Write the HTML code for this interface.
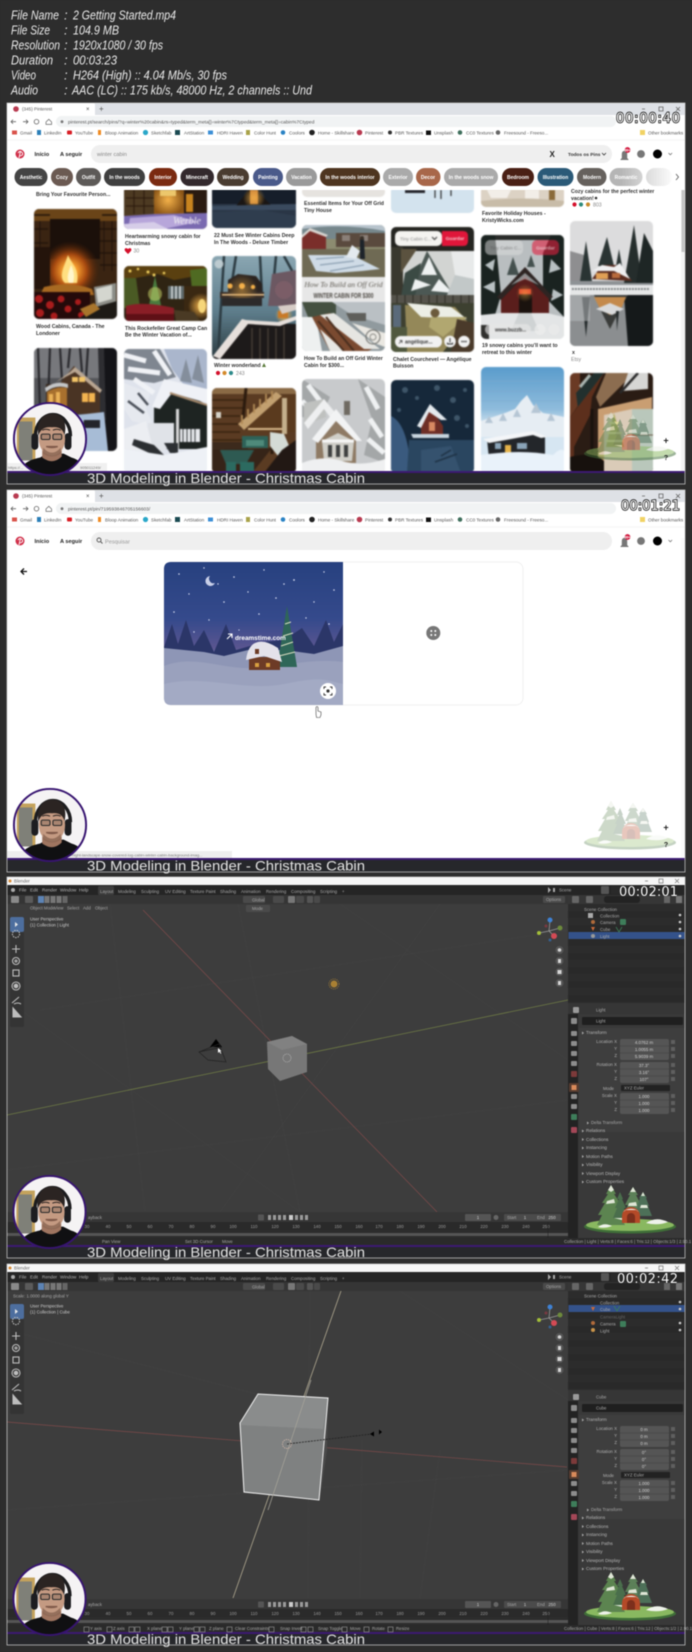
<!DOCTYPE html>
<html lang="en"><head><meta charset="utf-8"><title>2 Getting Started.mp4</title>
<style>
html,body{margin:0;padding:0;background:#2d2d2d}
#w{position:relative;width:692px;height:1652px;overflow:hidden;background:#2d2d2d;filter:blur(.42px)}
.b{position:absolute}
svg.p{position:absolute;border-radius:5px;overflow:hidden;filter:blur(.45px)}
svg.f{position:absolute;left:0;top:0}
text{font-family:"Liberation Sans",sans-serif}
.h{font-family:"Liberation Serif",serif;font-style:italic;font-size:13px;fill:#eaeaea}
.tt{font-size:14px;fill:#e2e2e2}
.tc{font-family:"DejaVu Sans",sans-serif;font-size:13px;fill:#fff;stroke:#000;stroke-width:1.4px;paint-order:stroke}
.bm{font-size:4.6px;fill:#555}
.pt{font-size:5.2px;font-weight:bold;fill:#333}
.ps{font-size:5.2px;fill:#888}
.pl{font-size:5px;font-weight:bold;fill:#fff;text-anchor:middle}
.n{font-size:5.6px;font-weight:bold;fill:#222}
.bl{font-size:4.6px;fill:#b5b5b5}
.bs{font-size:4.4px;fill:#a8a8a8}
.br{font-size:4.4px;fill:#b0b0b0;text-anchor:end}
.bv{font-size:4.4px;fill:#d0d0d0;text-anchor:middle}
.num{font-size:4.4px;fill:#9a9a9a;text-anchor:middle}
</style></head><body><div id="w">

<svg width="0" height="0" style="position:absolute"><defs>
<linearGradient id="gBlue" x1="0" y1="0" x2="0" y2="1"><stop offset="0" stop-color="#5a9ccc"/><stop offset=".4" stop-color="#8fbcdc"/><stop offset=".55" stop-color="#d4e4f0"/><stop offset="1" stop-color="#e6f0f8"/></linearGradient>
<linearGradient id="gNight" x1="0" y1="0" x2="0" y2="1"><stop offset="0" stop-color="#27417f"/><stop offset=".4" stop-color="#354a8c"/><stop offset=".6" stop-color="#5a5590"/><stop offset=".68" stop-color="#7d87ad"/><stop offset="1" stop-color="#8a93b3"/></linearGradient>
<linearGradient id="gTeal" x1="0" y1="0" x2="0" y2="1"><stop offset="0" stop-color="#8aa6b2"/><stop offset=".55" stop-color="#5d7c8a"/><stop offset="1" stop-color="#2a3a40"/></linearGradient>
<radialGradient id="gFire"><stop offset="0" stop-color="#fff0b0"/><stop offset=".22" stop-color="#f8a030"/><stop offset=".55" stop-color="#a84a10"/><stop offset="1" stop-color="#4a2008" stop-opacity="0"/></radialGradient>
<radialGradient id="gWarm"><stop offset="0" stop-color="#f4b24a"/><stop offset="1" stop-color="#f4b24a" stop-opacity="0"/></radialGradient>
<linearGradient id="fade" x1="0" y1="0" x2="1" y2="0"><stop offset="0" stop-color="#fff" stop-opacity="0"/><stop offset="1" stop-color="#fff"/></linearGradient>

<symbol id="man" viewBox="-40 -40 80 80" overflow="visible">
<clipPath id="mc"><circle cx="0" cy="0" r="36.5"/></clipPath>
<g clip-path="url(#mc)">
<rect x="-40" y="-40" width="80" height="80" fill="#f5f3f4"/>
<rect x="-34" y="-22" width="19" height="44" fill="#c4a25c"/>
<rect x="-32" y="-18" width="14" height="40" fill="#7f8078"/>
<path d="M-32 40C-30 26-24 22-10 19L-4 15 14 15 22 19C32 22 36 28 40 40Z" fill="#101012"/>
<path d="M-8 8V19Q3 27 12 18V8Z" fill="#9f7560"/>
<path d="M-15 -3A18 22 0 0 1 21 -3" fill="none" stroke="#1c1c1e" stroke-width="3.500"/>
<rect x="-19" y="-6" width="7" height="17" rx="3.500" fill="#1d1d20"/>
<rect x="15" y="-6" width="7" height="17" rx="3.500" fill="#1d1d20"/>
<ellipse cx="2" cy="0" rx="13.500" ry="17" fill="#c49a82"/>
<path d="M-12 -3C-14 -18-7 -26 2 -26 12 -26 18 -18 15 -4 13 -11 8 -13 2 -12-4 -13-10 -11-12 -3Z" fill="#2b2422"/>
<rect x="-9" y="-5" width="9" height="5.500" rx="1.500" fill="#a98571" stroke="#2a2a2a" stroke-width="1.100"/>
<rect x="3" y="-5" width="9" height="5.500" rx="1.500" fill="#a98571" stroke="#2a2a2a" stroke-width="1.100"/>
<path d="M-8 -9q4-2 8 0M3 -9q4-2 8 0" stroke="#2b2422" stroke-width="1" fill="none"/>
<path d="M-4 7H8V8.500Q2 10.500-4 8.500Z" fill="#805a4a"/>
<path d="M-7 9Q2 19 11 9V15Q2 21-7 15Z" fill="#8a6552" opacity=".8"/>
</g>
<circle cx="0" cy="0" r="37" fill="none" stroke="#371470" stroke-width="2"/>
</symbol>

<symbol id="logo" viewBox="0 0 92 50" overflow="visible">
<ellipse cx="44" cy="41.500" rx="46" ry="7" fill="#3f6e38"/>
<ellipse cx="44" cy="40" rx="44" ry="6" fill="#89b860"/>
<path d="M25 0L30 9H28L34 18H31L38 30H34L39 40H11L16 30H12L19 18H16L22 9H20Z" fill="#5c8450"/>
<path d="M25 0L28 5 25 7 22 5ZM21 16L28 14 29 18 20 19ZM30 30L37 31 36 35 28 33Z" fill="#dfe6d6"/>
<path d="M34 7L37 14H36L40 23H38L42 33H27L31 23H29L33 14H31Z" fill="#4a6e4c"/>
<path d="M47 2L52 10H50L55 20H52L57 31H37L42 20H39L44 10H42Z" fill="#5c8058"/>
<path d="M47 2L50 7H44ZM43 18L50 17 51 21 42 21Z" fill="#dfe6d6"/>
<path d="M57 7L61 13H60L63 21H62L66 31H48L52 21H51L54 13H53Z" fill="#4d7058"/>
<path d="M57 7L59 11H55ZM55 20L61 20 62 23 54 23Z" fill="#dfe6d6"/>
<path d="M36 38V31A9 9 0 0 1 54 31V38Z" fill="#b44a28"/>
<path d="M41 38V32A4 4 0 0 1 49 32V38Z" fill="#7c2f1c"/>
<path d="M37 27A9 6 0 0 1 53 27L50 25H40Z" fill="#f0f0ea"/>
<path d="M60 38Q70 31 82 37 72 41 60 38Z" fill="#eef2ea"/>
<path d="M12 42Q18 37 26 41 18 44 12 42Z" fill="#eef2ea"/>
</symbol>

<symbol id="hdr" viewBox="0 0 692 60" overflow="visible">
<rect x="7" y="0" width="678" height="38" fill="#fff"/>
<rect x="7" y="0" width="678" height="12" fill="#dee1e6"/>
<path d="M7 12V2Q7 0 9 0H93Q95 0 95 2V12Z" fill="#fff"/>
<circle cx="16" cy="6" r="2.800" fill="#b83a50"/>
<text x="22" y="7.700" class="bm" fill="#666">(345) Pinterest</text>
<text x="86" y="8" style="font-size:6px;fill:#444">×</text>
<text x="99" y="8.500" style="font-size:8px;fill:#555">+</text>
<path d="M642 6h3M659 4h4v4h-4zM676 4l4 4M680 4l-4 4" stroke="#666" stroke-width=".8" fill="none"/>
<path d="M11 18.700h5M13 16.700l-2 2 2 2M23 18.700h5M26 16.700l2 2-2 2" stroke="#666" stroke-width=".8" fill="none"/>
<circle cx="36.500" cy="18.700" r="2.300" fill="none" stroke="#666" stroke-width=".8"/>
<path d="M46 19l2.800-2.800 2.800 2.800v2.400h-5.600z" fill="none" stroke="#666" stroke-width=".7"/>
<rect x="56" y="13" width="560" height="11" rx="5.500" fill="#f1f3f4"/>
<circle cx="62" cy="18.700" r="1.400" fill="#777"/>
<g class="bm" transform="translate(0,-2)">
<path d="M12 29.500h5v4h-5z" fill="#d9534a"/><text x="20" y="33.500">Gmail</text>
<rect x="37" y="29" width="4" height="5" fill="#2c7fb8"/><text x="44" y="33.500">LinkedIn</text>
<rect x="67" y="29.500" width="5" height="4" rx="1" fill="#d81f26"/><text x="75" y="33.500">YouTube</text>
<rect x="98" y="29" width="3" height="5" fill="#ef8a21"/><text x="105" y="33.500">Bloop Animation</text>
<circle cx="145.500" cy="31.500" r="2.600" fill="#2aa7c9"/><text x="151" y="33.500">Sketchfab</text>
<rect x="175" y="29" width="5" height="5" fill="#1b4a52"/><text x="184" y="33.500">ArtStation</text>
<rect x="208" y="29.500" width="5" height="4" fill="#3c8fd6"/><text x="217" y="33.500">HDRI Haven</text>
<rect x="246" y="29" width="4" height="5" fill="#a9a24a"/><text x="254" y="33.500">Color Hunt</text>
<circle cx="283" cy="31.500" r="2.300" fill="#2a82c4"/><text x="289" y="33.500">Coolors</text>
<circle cx="312" cy="31.500" r="2.800" fill="#222"/><text x="318" y="33.500">Home - Skillshare</text>
<circle cx="359.500" cy="31.500" r="2.800" fill="#b83a50"/><text x="365" y="33.500">Pinterest</text>
<circle cx="390" cy="31.500" r="2" fill="#333"/><text x="395" y="33.500">PBR Textures</text>
<rect x="426" y="29.500" width="5" height="4.500" fill="#111"/><text x="434" y="33.500">Unsplash</text>
<circle cx="460" cy="31.500" r="2.300" fill="#3f6f5c"/><text x="466" y="33.500">CC0 Textures</text>
<circle cx="498" cy="31.500" r="2.300" fill="#666"/><text x="504" y="33.500">Freesound - Freeso...</text>
<rect x="640" y="29" width="5" height="5" fill="#f1d264"/><text x="648" y="33.500">Other bookmarks</text>
</g>
<path d="M7 37h678" stroke="#e8e8e8" stroke-width=".5"/>
<circle cx="20" cy="51" r="4.500" fill="#d1304a"/>
<path d="M19 55l1.400-6.500M18 50q2-3 4-.5t-2 3.500" stroke="#fff" stroke-width=".9" fill="none"/>
<text x="34.500" y="53" class="n">Início</text>
<text x="60" y="53" class="n">A seguir</text>
</symbol>

<symbol id="hic" viewBox="0 0 692 20" overflow="visible">
<path d="M620.500 16v-.6l1.300-1.300v-4.100q0-3 2.700-3.300 2.700 .3 2.700 3.300v4.100l1.300 1.300v.6z" fill="#777"/>
<circle cx="627.500" cy="6" r="2.900" fill="#d1143a"/>
<text x="627.500" y="7.400" style="font-size:3.600px;font-weight:bold;fill:#fff;text-anchor:middle">99+</text>
<circle cx="641" cy="10" r="3.900" fill="#777"/>
<circle cx="657.500" cy="10" r="4.500" fill="#000"/>
<path d="M668.500 9l1.800 1.800 1.800-1.800" stroke="#777" stroke-width=".8" fill="none"/>
</symbol>

<symbol id="bch" viewBox="0 0 692 1652" overflow="visible">
<rect x="7" y="877" width="678" height="8" fill="#f6f6f6"/>
<circle cx="10" cy="881" r="1.500" fill="#d88a33"/>
<text x="14" y="882.500" style="font-size:4.600px;fill:#666">Blender</text>
<path d="M645 881h3M659 879h4v4h-4zM675 879l4 4M679 879l-4 4" stroke="#777" stroke-width=".7" fill="none"/>
<rect x="7" y="885" width="561" height="10" fill="#252525"/>
<rect x="568" y="885" width="117" height="10" fill="#252525"/>
<rect x="7" y="895" width="561" height="9" fill="#353535"/>
<circle cx="13" cy="890" r="2" fill="#aaa"/>
<g class="bl">
<text x="19" y="891.500">File</text><text x="30" y="891.500">Edit</text><text x="42" y="891.500">Render</text><text x="60" y="891.500">Window</text><text x="79" y="891.500">Help</text>
</g>
<rect x="98" y="886" width="16" height="9" rx="1.500" fill="#3c3c3c"/>
<g class="bs" fill="#999">
<text x="100" y="893">Layout</text><text x="118" y="893">Modeling</text><text x="141" y="893">Sculpting</text><text x="165" y="893">UV Editing</text><text x="190" y="893">Texture Paint</text><text x="220" y="893">Shading</text><text x="241" y="893">Animation</text><text x="266" y="893">Rendering</text><text x="291" y="893">Compositing</text><text x="320" y="893">Scripting</text><text x="342" y="893">+</text>
<text x="559" y="891.500">Scene</text>
</g>
<path d="M548 887l3 3-3 3zM553 888h2v4h-2z" fill="#aaa"/>
<rect x="601" y="886" width="8" height="8" rx="1" fill="#555"/>
<rect x="611" y="886" width="60" height="8" fill="#2a2a2a"/>
<g fill="#8a8a8a">
<rect x="11" y="896" width="8" height="7" rx="1"/>
<rect x="25" y="896" width="8" height="7" rx="1" fill="#5b5b5b"/>
<rect x="38" y="896" width="6" height="7" fill="#5c83b4"/><rect x="44.500" y="896" width="5" height="7" fill="#777"/><rect x="50.500" y="896" width="5" height="7" fill="#777"/><rect x="56.500" y="896" width="5" height="7" fill="#777"/><rect x="62.500" y="896" width="5" height="7" fill="#666"/>
<rect x="243" y="896" width="22" height="7" rx="1" fill="#4a4a4a"/><rect x="273" y="896" width="11" height="7" rx="1" fill="#4a4a4a"/><rect x="288" y="896" width="7" height="7" rx="1" fill="#777"/><rect x="296" y="896" width="8" height="7" rx="1" fill="#4a4a4a"/><rect x="307" y="896" width="6" height="7" rx="1" fill="#555"/><rect x="314" y="896" width="6" height="7" rx="1" fill="#4a4a4a"/>
<rect x="543" y="896" width="22" height="7" rx="1" fill="#4a4a4a"/>
</g>
<text x="546" y="901" class="bs">Options</text>
<text x="252" y="901.500" class="bs">Global</text>
<rect x="10" y="917" width="14" height="15" rx="2" fill="#4d6e9e"/>
<rect x="10" y="932" width="14" height="95" rx="2" fill="#2f2f2f" opacity=".6"/>
<path d="M15 922l3 2.500-3 2.500z" fill="#e8e8e8"/>
<g fill="none" stroke="#bdbdbd" stroke-width="1.100">
<circle cx="16" cy="934" r="3.600" stroke-dasharray="1.500 1"/>
<path d="M16 945v8M12 949h8"/>
<circle cx="16" cy="961" r="3.500"/><circle cx="16" cy="961" r="1"/>
<rect x="13" y="970" width="6" height="6"/>
<circle cx="16" cy="986" r="4"/><circle cx="16" cy="986" r="1.800" fill="#bdbdbd"/>
<path d="M12 1003l7-6M14 1004q4-2 7 0"/>
<path d="M13 1008v9h8z" fill="#bdbdbd"/>
</g>
<path d="M549 931l1-10M549 931l5 5M549 931l11-3M549 931l-10 2" stroke="#999" stroke-width=".8"/>
<circle cx="550" cy="920" r="2.500" fill="#3f82d4"/><circle cx="554" cy="936" r="3" fill="#d34a55"/><circle cx="560" cy="928" r="2.500" fill="#6d8a3c"/><circle cx="539" cy="933" r="2" fill="#a3bf3a"/><circle cx="550" cy="940" r="1.500" fill="#365f8f"/><circle cx="546" cy="926" r="1.500" fill="#7a3a42"/>
<g fill="#555"><circle cx="559.500" cy="950" r="4"/><circle cx="559.500" cy="961" r="4"/><circle cx="559.500" cy="972" r="4"/><circle cx="559.500" cy="983" r="4"/></g>
<g fill="#d5d5d5"><circle cx="559.500" cy="950" r="1.800"/><rect x="558" y="959" width="3" height="4"/><rect x="557.500" y="970" width="4" height="4"/><rect x="558" y="981" width="3" height="4"/></g>
<rect x="7" y="1212" width="561" height="26" fill="#2c2c2c"/>
<rect x="7" y="1212" width="561" height="10" fill="#363636"/>
<rect x="7" y="1222" width="561" height="8" fill="#2a2a2a"/>
<rect x="7" y="1233" width="561" height="3" fill="#555"/>
<g fill="#9a9a9a"><rect x="258" y="1214.500" width="6" height="6" rx="1" fill="#555"/><rect x="268" y="1215" width="3" height="5"/><rect x="273" y="1215" width="3" height="5"/><rect x="278" y="1215" width="3" height="5"/><rect x="283" y="1215" width="3" height="5"/><rect x="289" y="1215" width="4" height="5" fill="#ccc"/><rect x="295" y="1215" width="3" height="5"/><rect x="300" y="1215" width="3" height="5"/><rect x="305" y="1215" width="3" height="5"/></g>
<rect x="465" y="1214" width="26" height="7" rx="1" fill="#555"/><rect x="504" y="1214" width="57" height="7" rx="1" fill="#4b4b4b"/>
<circle cx="496" cy="1217.500" r="2.500" fill="#666"/>
<text x="478" y="1219" class="bv">1</text>
<text x="507" y="1219" class="bs">Start</text><text x="525" y="1219" class="bv">1</text><text x="537" y="1219" class="bs">End</text><text x="552" y="1219" class="bv">250</text>
<g class="num">
<text x="87" y="1228">30</text><text x="108" y="1228">40</text><text x="129" y="1228">50</text><text x="150" y="1228">60</text><text x="171" y="1228">70</text><text x="192" y="1228">80</text><text x="213" y="1228">90</text><text x="233" y="1228">100</text><text x="254" y="1228">110</text><text x="275" y="1228">120</text><text x="296" y="1228">130</text><text x="317" y="1228">140</text><text x="338" y="1228">150</text><text x="359" y="1228">160</text><text x="379" y="1228">170</text><text x="400" y="1228">180</text><text x="421" y="1228">190</text><text x="442" y="1228">200</text><text x="463" y="1228">210</text><text x="484" y="1228">220</text><text x="505" y="1228">230</text><text x="526" y="1228">240</text><text x="546" y="1228">250</text>
</g>
<path d="M548 1222v16" stroke="#222" stroke-width=".6"/>
<rect x="7" y="1238" width="678" height="7" fill="#2a2a2a"/>
<rect x="7" y="1245" width="678" height="2" fill="#3c1a72"/>
<rect x="7" y="1247" width="678" height="11" fill="#26272b"/>
<rect x="568" y="895" width="117" height="108" fill="#2c2c2c"/>
<rect x="568" y="895" width="117" height="9" fill="#363636"/>
<g fill="#292929"><rect x="568" y="911" width="117" height="7"/><rect x="568" y="925" width="117" height="7"/><rect x="568" y="939" width="117" height="7"/><rect x="568" y="953" width="117" height="7"/><rect x="568" y="967" width="117" height="7"/><rect x="568" y="981" width="117" height="7"/><rect x="568" y="995" width="117" height="7"/></g>
<rect x="572" y="896" width="7" height="7" rx="1" fill="#666"/><rect x="586" y="896" width="7" height="7" rx="1" fill="#666"/><rect x="604" y="896" width="36" height="7" rx="3" fill="#232323"/><rect x="664" y="896" width="6" height="7" fill="#666"/><rect x="676" y="896" width="6" height="7" fill="#777"/>
<rect x="568" y="1003" width="117" height="235" fill="#393939"/>
<rect x="568" y="1003" width="117" height="11" fill="#363636"/>
<rect x="568" y="1014" width="10" height="224" fill="#232323"/>
<g fill="#8c8c8c">
<rect x="571" y="1018" width="6" height="6" rx="1"/><rect x="571" y="1031" width="6" height="5" rx="1"/><rect x="571" y="1041" width="6" height="5" rx="1"/><rect x="571" y="1051" width="6" height="5" rx="1"/><rect x="571" y="1061" width="6" height="5" rx="1"/><rect x="571" y="1071" width="6" height="6" rx="1" fill="#7c3a3a"/><rect x="569" y="1083" width="10" height="9" rx="1" fill="#563c30"/><rect x="571.500" y="1085" width="5" height="5" fill="#d98a5a"/><rect x="571" y="1094" width="6" height="5" rx="1"/><rect x="571" y="1104" width="6" height="5" rx="1"/><rect x="571" y="1114" width="6" height="6" rx="1" fill="#3e7d5a"/><rect x="571" y="1127" width="6" height="6" rx="1" fill="#a34757"/>
</g>
<rect x="573" y="1007" width="6" height="6" rx="1" fill="#9a9a9a"/>
<rect x="582" y="1017" width="101" height="8" rx="1" fill="#1f1f1f"/>
<rect x="579" y="1028" width="106" height="104" fill="#3e3e3e"/>
<g fill="#555">
<rect x="620" y="1039" width="49" height="21" rx="2"/><rect x="620" y="1062" width="49" height="21" rx="2"/><rect x="620" y="1093" width="49" height="21" rx="2"/>
</g>
<path d="M620 1046h49M620 1053h49M620 1069h49M620 1076h49M620 1100h49M620 1107h49" stroke="#3e3e3e" stroke-width=".6"/>
<rect x="621" y="1085" width="49" height="6" rx="1" fill="#222"/>
<text x="624" y="1089.500" class="bs" fill="#bbb">XYZ Euler</text>
<g class="br">
<text x="617" y="1043">Location X</text><text x="617" y="1050">Y</text><text x="617" y="1057">Z</text>
<text x="617" y="1066">Rotation X</text><text x="617" y="1073">Y</text><text x="617" y="1080">Z</text>
<text x="614" y="1090">Mode</text>
<text x="617" y="1097">Scale X</text><text x="617" y="1104">Y</text><text x="617" y="1111">Z</text>
</g>
<g class="bv">
<text x="644" y="1098">1.000</text><text x="644" y="1105">1.000</text><text x="644" y="1112">1.000</text>
</g>
<path d="M671 1040h4v4h-4zM671 1047h4v4h-4zM671 1054h4v4h-4zM671 1063h4v4h-4zM671 1070h4v4h-4zM671 1077h4v4h-4zM671 1094h4v4h-4zM671 1101h4v4h-4zM671 1108h4v4h-4z" fill="#888" opacity=".45"/>
<g class="bl">
<text x="586" y="1034">Transform</text>
<text x="591" y="1124" class="bs">Delta Transform</text>
<text x="586" y="1132">Relations</text><text x="586" y="1141">Collections</text><text x="586" y="1149">Instancing</text><text x="586" y="1158">Motion Paths</text><text x="586" y="1166">Visibility</text><text x="586" y="1175">Viewport Display</text><text x="586" y="1183">Custom Properties</text>
</g>
<path d="M582 1031.500l2 1.500-2 1.500zM587 1121.500l2 1.500-2 1.500zM582 1129.500l2 1.500-2 1.500zM582 1138l2 1.500-2 1.500zM582 1146.500l2 1.500-2 1.500zM582 1155l2 1.500-2 1.500zM582 1163.500l2 1.500-2 1.500zM582 1172l2 1.500-2 1.500zM582 1180.500l2 1.500-2 1.500z" fill="#aaa"/>
</symbol>
</defs></svg>

<div class="b" style="left:7px;top:103px;width:678px;height:368px;background:#fff"></div>
<div class="b" style="left:7px;top:490px;width:678px;height:368px;background:#fff"></div>

<!-- COL 1: fireplace -->
<svg class="p" style="left:34px;top:209px" width="83" height="110" viewBox="0 0 83 110">
<rect width="83" height="110" fill="#3a2412"/>
<rect width="83" height="12" fill="#6a4418"/>
<path d="M0 6H16M68 6H83M66 20H83M66 32H83M66 44H83M66 56H83M0 20H14M0 34H14" stroke="#23150b" stroke-width="1.500"/>
<path d="M70 12v50M78 12v50M6 12v40" stroke="#23150b" stroke-width="1"/>
<path d="M16 10H66V50H16Z" fill="#1b100a"/>
<circle cx="36" cy="62" r="30" fill="url(#gFire)"/>
<path d="M31 74C24 68 30 58 34 46 37 54 46 60 43 74Z" fill="#ffdf80"/><path d="M35 74C32 68 35 62 37 56 40 62 41 68 39 74Z" fill="#fff6cc"/>
<path d="M0 38H16V80H0Z" fill="#24140b"/>
<path d="M10 78Q36 72 58 80L60 86H6Z" fill="#a86a22"/>
<rect x="0" y="83" width="56" height="27" fill="#240a0a"/>
<g fill="#a81c1c"><circle cx="5" cy="90" r="4"/><circle cx="16" cy="96" r="4"/><circle cx="27" cy="90" r="3.500"/><circle cx="6" cy="104" r="4"/><circle cx="34" cy="100" r="3.500"/><circle cx="20" cy="107" r="3.500"/><circle cx="44" cy="93" r="3"/><circle cx="47" cy="106" r="3"/></g>
<path d="M60 78L82 74V94L62 98Z" fill="#8d8e88"/><path d="M62 80L78 76V90L64 94Z" fill="#d4d6cf"/>
<path d="M44 110L62 98 83 92V110Z" fill="#1d1a16"/><path d="M46 100L60 94 66 100 52 108Z" fill="#a8752c"/>
</svg>
<svg class="p" style="left:34px;top:348px" width="83" height="103" viewBox="0 0 83 103">
<rect width="83" height="103" fill="#55565a"/>
<path d="M0 0H83V30H0Z" fill="#77787c"/>
<path d="M4 0L6 62M16 0L14 56M26 0L28 32M36 0L34 20M46 0L48 24M54 0L52 30" stroke="#2a2a2e" stroke-width="2.200"/>
<path d="M68 0H83V103H72Z" fill="#141418"/>
<path d="M64 0H70L72 72H66Z" fill="#2e2e32"/>
<path d="M12 36H62V66H12Z" fill="#382a20"/>
<path d="M40 18L66 44 66 66H22V40Z" fill="#4a3424"/>
<path d="M36 24L41 19 68 42 66 45 41 24 22 34Z" fill="#b9a692"/>
<path d="M11 40Q22 32 34 36V40Q22 36 12 44Z" fill="#c4c6c8"/>
<path d="M13 44Q22 38 33 40V62H13Z" fill="#a8702e"/><path d="M15 46h4v14h-4zM22 44h4v16h-4z" fill="#e9b258"/>
<rect x="38" y="29" width="6" height="5" fill="#f2c468"/><rect x="45" y="29" width="6" height="5" fill="#f2c468"/>
<rect x="48" y="45" width="13" height="9" fill="#f2b450"/><path d="M54.500 45v9" stroke="#7a4a20"/>
<path d="M0 66H68V103H0Z" fill="#41454f"/>
<path d="M34 68L70 64 74 103H20Z" fill="#a7bcd6"/><path d="M50 72H66V80H48Z" fill="#23242a"/>
</svg>
<!-- COL 2 -->
<svg class="p" style="left:123.500px;top:186px" width="83" height="43" viewBox="0 0 83 43">
<rect width="83" height="43" fill="#3a2612"/>
<path d="M0 4H30V30H0Z" fill="#4d3a22"/><path d="M2 12H30M2 20H30M10 4V28M20 4V28" stroke="#2a1a0c" stroke-width="1"/>
<rect x="30" y="4" width="36" height="24" fill="#8a5416"/>
<circle cx="44" cy="14" r="16" fill="url(#gWarm)"/>
<rect x="60" y="4" width="23" height="26" fill="#2a1a10"/><rect x="62" y="8" width="7" height="18" fill="#c8841f"/>
<path d="M36 4H52V10H36Z" fill="#ecc76c"/>
<path d="M0 30L30 28 83 27V43H0Z" fill="#7a6ab0"/>
<path d="M6 32L50 29 74 36 40 43H4Z" fill="#b7a6da"/><path d="M0 38L30 36 44 43H0Z" fill="#d6cde8"/>
<text x="49" y="38" style="font-family:'Liberation Serif',serif;font-style:italic;font-size:10px;fill:#f0f0f0">Werble</text>
</svg>
<svg class="p" style="left:123.500px;top:266px" width="83" height="55" viewBox="0 0 83 55">
<rect width="83" height="55" fill="#2f2413"/>
<path d="M0 0H83V8L50 14 34 8 0 14Z" fill="#5a4010"/>
<g fill="#f0d060"><circle cx="6" cy="5" r="1.500"/><circle cx="14" cy="3" r="1.300"/><circle cx="24" cy="6" r="1.500"/><circle cx="30" cy="9" r="1.500"/><circle cx="40" cy="7" r="1.300"/><circle cx="70" cy="6" r="1.300"/></g>
<path d="M0 12H12L16 42H0Z" fill="#4a5a24"/>
<path d="M24 44L31 10 38 44Z" fill="#4a7a3e"/><circle cx="31" cy="28" r="7" fill="#c2d067" opacity=".55"/>
<rect x="44" y="20" width="18" height="13" fill="#606a6c"/><path d="M48 20v13M52 20v13M56 20v13" stroke="#e2e6e8" stroke-width="1.400"/>
<path d="M66 4L83 2V30L68 24Z" fill="#4f6a22"/>
<rect x="60" y="20" width="23" height="35" fill="#3a2812"/><circle cx="77" cy="40" r="13" fill="url(#gWarm)"/><ellipse cx="78" cy="40" rx="4" ry="7" fill="#f6d67a"/>
<path d="M2 40C14 36 34 38 50 42V55H2Z" fill="#8a1e26"/><path d="M2 48H50V55H2Z" fill="#5f1016"/>
<path d="M50 44L70 46 76 55H52Z" fill="#4a3a24"/>
</svg>
<svg class="p" style="left:123.500px;top:349px" width="83" height="124" viewBox="0 0 83 124">
<rect width="83" height="124" fill="#dfe3ec"/>
<path d="M40 0H83V40L60 36 48 20Z" fill="#aab6cc"/>
<path d="M0 0H36L52 28 30 34 0 30Z" fill="#7f8690"/>
<path d="M0 6L22 12M4 20L36 24M30 2L46 26M10 30L30 44" stroke="#f0f2f6" stroke-width="5"/>
<path d="M0 34L26 44 22 60 30 78 8 72 0 60Z" fill="#e6e9ef"/>
<path d="M14 44L24 56M4 52L20 64" stroke="#4a4f58" stroke-width="2.500"/>
<path d="M62 10L68 34 56 32ZM74 6L80 34 68 30Z" fill="#7a8490" opacity=".8"/>
<path d="M30 56L44 34 83 56V100H30Z" fill="#1e2422"/>
<path d="M28 58L40 30 83 40V54L48 44 36 60Z" fill="#eff1f6"/>
<path d="M46 44L83 56" stroke="#a88b6e" stroke-width="2"/>
<rect x="52" y="60" width="3" height="40" fill="#d8d8d8"/>
<path d="M56 80H76V93H56Z" fill="#e8eaee"/><path d="M59 80v13M63 80v13M67 80v13M71 80v13" stroke="#333a3a" stroke-width="1"/>
<path d="M24 74H50V96L30 106 24 96Z" fill="#e0e3e8"/>
<path d="M0 80L22 72 30 104 0 100Z" fill="#eceef2"/>
<path d="M10 90L30 96 40 106 34 108 8 96ZM40 94H54V104H46Z" fill="#2c2f32"/>
<path d="M0 100L40 106 83 98V124H0Z" fill="#eef1f6"/>
</svg>
<!-- COL 3 -->
<svg class="p" style="left:212px;top:186px" width="84" height="42" viewBox="0 0 84 42">
<rect width="84" height="42" fill="#2a3646"/>
<rect width="84" height="18" fill="#161e2a"/>
<path d="M24 20L40 0 60 20Z" fill="#1a1614"/>
<path d="M38 18V4H46V18Z" fill="#c98038"/><circle cx="42" cy="12" r="11" fill="url(#gWarm)" opacity=".8"/>
<path d="M0 20L84 18V24H0Z" fill="#3a4a5e"/>
<path d="M0 26L50 24 84 30V42H0Z" fill="#2f3d4e"/>
</svg>
<svg class="p" style="left:212px;top:256px" width="84" height="103" viewBox="0 0 84 103">
<rect width="84" height="103" fill="url(#gTeal)"/>
<path d="M48 0L50 40M12 0L6 100M24 0L20 26M64 0L62 22M72 0L84 22" stroke="#2c3b42" stroke-width="2.500"/>
<path d="M60 18L84 14V50L56 50Z" fill="#6c5862"/><circle cx="72" cy="34" r="9" fill="#82606a" opacity=".7"/>
<path d="M16 24L26 18 44 20 50 28V38H16Z" fill="#2a2320"/>
<rect x="8" y="36" width="44" height="6" fill="#3b3028"/>
<rect x="10" y="38" width="42" height="1.500" fill="#e8c08a"/>
<g fill="#f4b04a"><circle cx="18" cy="30" r="2.600"/><circle cx="30" cy="30" r="3"/><circle cx="41" cy="31" r="2.200"/></g>
<circle cx="30" cy="34" r="16" fill="url(#gWarm)" opacity=".5"/>
<rect x="10" y="42" width="40" height="8" fill="#2c2a2a"/>
<circle cx="72" cy="59" r="9" fill="url(#gWarm)"/><rect x="66" y="55" width="10" height="7" fill="#c87a28"/>
<path d="M66 50L84 48V54L70 58Z" fill="#d6ccc6"/>
<path d="M0 103L34 66 84 68V103Z" fill="#1d1a1a"/>
<path d="M1 100L30 63 34 64 66 66 84 60 84 64 68 70 36 68 8 103Z" fill="#e6dfdb"/>
<path d="M40 72v31M48 72v31M56 72v31M64 72v31M72 70v33" stroke="#4a4038" stroke-width="1.300"/>
<circle cx="7" cy="8" r="4.500" fill="#c7d2d6" opacity=".85"/>
</svg>
<svg class="p" style="left:212px;top:388px" width="84" height="85" viewBox="0 0 84 85">
<rect width="84" height="85" fill="#5a3b22"/>
<rect width="84" height="6" fill="#8a6a45"/>
<path d="M0 12H34M0 20H32M0 28H28M0 36H26M0 44H28M0 52H30" stroke="#38230f" stroke-width="1.600"/>
<path d="M34 0L30 40M60 30L60 66" stroke="#2c1b0e" stroke-width="3"/>
<path d="M26 36L64 4 70 8 32 42Z" fill="#c2a070"/>
<path d="M30 36v-9M36 30v-9M42 25v-9M48 20v-9M54 15v-9M60 11v-8" stroke="#b18a56" stroke-width="1.800"/>
<path d="M38 44H84V6L70 8 34 42Z" fill="#5a3a1e"/>
<rect x="36" y="40" width="36" height="2" fill="#d9b88a"/>
<rect x="70" y="10" width="5" height="36" fill="#c4b08c"/>
<rect x="4" y="24" width="5" height="6" fill="#d6d2c8"/>
<path d="M0 54H36V85H0Z" fill="#3c2a1c"/>
<path d="M30 48H56V60H30Z" fill="#2e6258"/><path d="M34 52H52V58H34Z" fill="#4f8a7a"/>
<path d="M0 62L60 60 40 85H0Z" fill="#362418"/><path d="M8 62H42L34 76H14Z" fill="#2e5a52"/>
<path d="M58 44L72 46 78 60 66 68 58 58Z" fill="#d4dbd6"/>
<path d="M52 85L70 62 84 52V85Z" fill="#221814"/>
<path d="M28 74H42V85H28ZM14 74H24V85H14Z" fill="#2c6a60"/>
</svg>
<!-- COL 4 -->
<svg class="p" style="left:302px;top:186px" width="83" height="11" viewBox="0 0 83 11"><rect width="83" height="11" fill="#e6e3df"/></svg>
<svg class="p" style="left:302px;top:225px" width="83" height="126" viewBox="0 0 83 126">
<rect width="83" height="53" fill="#8c8c70"/>
<path d="M0 0H83V8H0Z" fill="#b7c3cc"/>
<path d="M0 4Q40 -2 83 6V14H0Z" fill="#76878c"/>
<path d="M0 10L8 4 24 10V24H0Z" fill="#7a2e2a"/><path d="M0 10L8 3 26 10 24 12 8 6 0 13Z" fill="#d8d4d0"/>
<rect x="34" y="8" width="49" height="14" fill="#5a4a3e"/><rect x="40" y="10" width="8" height="6" fill="#8a7f78"/><rect x="58" y="10" width="8" height="6" fill="#8a7f78"/>
<path d="M0 24H83V53H0Z" fill="#6f6a54"/>
<path d="M6 30L50 30 66 38 78 44 60 46 34 48 14 46Z" fill="#cfdbe6"/><path d="M14 34L42 32M18 40L52 36M28 46L62 40" stroke="#8ca0b2" stroke-width="1.200"/>
<path d="M58 14L62 14 63 34 58 34Z" fill="#1d232a"/><circle cx="60" cy="13" r="2" fill="#3a3028"/>
<path d="M50 20L58 26 54 34 44 32Z" fill="#e4eaef"/>
<rect y="52" width="83" height="25" fill="#e7e7e7"/>
<text x="41.500" y="62" style="font-family:'Liberation Serif',serif;font-style:italic;font-size:7.500px;fill:#5c5850;text-anchor:middle">How To Build an Off Grid</text>
<text x="41.500" y="73" textLength="60" lengthAdjust="spacingAndGlyphs" style="font-family:'Liberation Sans',sans-serif;font-size:7.500px;font-weight:bold;fill:#4a4640;text-anchor:middle">WINTER CABIN FOR $300</text>
<rect y="77" width="83" height="49" fill="#909a9e"/>
<path d="M0 77H34V92H6Z" fill="#445040"/><path d="M30 77H83V100L50 90Z" fill="#bac0c4"/>
<path d="M44 88H64V96H48Z" fill="#5e5e5a"/>
<path d="M0 92H14L20 126H0Z" fill="#eef0f0"/>
<path d="M10 92L28 88 74 122 66 126H28Z" fill="#7a4a30"/>
<path d="M18 90L32 88 78 124 62 124ZM18 104L42 126H28Z" fill="#e6e6e2"/>
<path d="M16 96L42 126M24 92L52 126" stroke="#4a2f1f" stroke-width="2"/>
<path d="M50 98L83 108V122L72 118Z" fill="#eae8e2"/>
<circle cx="71" cy="112" r="7" fill="none" stroke="#6a6a66" stroke-width="1"/><circle cx="71" cy="112" r="3" fill="none" stroke="#6a6a66" stroke-width=".7"/>
</svg>
<svg class="p" style="left:302px;top:379px" width="83" height="94" viewBox="0 0 83 94">
<rect width="83" height="94" fill="#c8cacc"/>
<path d="M0 0L28 18 18 40 0 38ZM56 0L83 18V84L62 76 70 40Z" fill="#a4a7a8"/>
<path d="M6 6L18 22M64 8L76 30M68 40L80 58M66 60L82 74M0 22L12 34" stroke="#eff1f2" stroke-width="5"/>
<rect x="42" y="22" width="6" height="14" fill="#6f6a62"/>
<path d="M2 24L22 20 24 38 2 46Z" fill="#bfc1bf"/>
<path d="M2 44L22 20 40 42 34 46 22 30 6 50Z" fill="#eeeff0"/>
<path d="M14 60L34 36 54 60V84H14Z" fill="#8e7a64"/>
<path d="M10 60L34 30 60 62 54 62 34 42 16 64Z" fill="#f2f3f4"/>
<path d="M20 62L36 54 52 62 50 82H22Z" fill="#d0cfc8"/><path d="M20 62H52" stroke="#f6f6f6" stroke-width="3"/>
<rect x="26" y="66" width="4" height="12" fill="#3e4040"/><rect x="34" y="66" width="4" height="12" fill="#3e4040"/><rect x="42" y="66" width="4" height="12" fill="#3e4040"/>
<path d="M0 84Q20 76 40 82T83 80V94H0Z" fill="#eff0f1"/>
</svg>
<!-- COL 5 -->
<svg class="p" style="left:391px;top:186px" width="83" height="27" viewBox="0 0 83 27">
<rect width="83" height="27" fill="#d3e3ee"/><path d="M14 4h20v3H14z" fill="#23232a"/><path d="M44 4v8M50 4v9M60 4v6" stroke="#2a2a2a" stroke-width="1.200"/>
</svg>
<svg class="p" style="left:391px;top:227px" width="83" height="125" viewBox="0 0 83 125">
<rect width="83" height="125" fill="#d2d4d2"/>
<rect width="83" height="24" fill="#242420"/>
<path d="M0 20H12V70H0Z" fill="#39382e"/><path d="M10 22L26 22 10 46Z" fill="#5b523f"/>
<path d="M60 24H83V60H66Z" fill="#e8eaea"/>
<path d="M36 24L62 68 16 70Z" fill="#4c5854"/><path d="M14 46L30 36 24 70 10 70Z" fill="#3b4a44"/>
<path d="M38 30L46 48 30 48ZM24 52L40 58 20 64ZM48 52L62 66 40 64Z" fill="#eef1f1"/>
<path d="M64 48L83 52V72L56 68Z" fill="#c2c8c8"/>
<rect x="0" y="68" width="83" height="8" fill="#54524a"/><path d="M6 68v8M14 68v8M22 68v8M30 68v8M38 68v8M46 68v8M54 68v8M62 68v8M70 68v8M78 68v8" stroke="#2e2d26" stroke-width="1"/>
<rect x="0" y="76" width="83" height="49" fill="#3d4030"/>
<path d="M14 78L64 80 76 94 52 125H16Z" fill="#948859"/>
<path d="M16 76L60 80 76 92 30 90Z" fill="#eceee6"/><path d="M40 90H76L52 110 38 100Z" fill="#b1a770"/>
<circle cx="44" cy="86" r="4.500" fill="#6c5a3c"/>
<path d="M2 78H10V100H2Z" fill="#5a6a7a"/><path d="M0 100H16V125H0Z" fill="#50583e"/>
<path d="M66 92L83 96V125H60Z" fill="#4a3a2a"/>
<rect x="4" y="4" width="47" height="15" rx="5" fill="#f4f3f0"/>
<text x="9" y="13.500" style="font-size:4.800px;fill:#888">Tiny Cabin C...</text>
<path d="M41 10l2.500 2.500 2.500-2.500" stroke="#333" stroke-width="1" fill="none"/>
<path d="M51 4h21q5 0 5 5v5q0 5-5 5h-21z" fill="#e0163a"/>
<text x="64" y="13" style="font-size:4.800px;font-weight:bold;fill:#f6cdd4;text-anchor:middle">Guardar</text>
<rect x="4" y="109" width="47" height="11.500" rx="5.700" fill="#f2f2f2"/>
<text x="14" y="116.500" style="font-size:5px;font-weight:bold;fill:#333">angélique...</text>
<path d="M8 116.500l3-3M8.500 113.500h2.500v2.500" stroke="#333" stroke-width=".7" fill="none"/>
<circle cx="59" cy="114.500" r="5.800" fill="#f2f2f2"/><circle cx="73" cy="114.500" r="5.800" fill="#f2f2f2"/>
<path d="M56.500 115.500v1.500h5v-1.500M59 111v4.500" stroke="#222" stroke-width=".9" fill="none"/>
<circle cx="71" cy="114.500" r=".8" fill="#222"/><circle cx="73" cy="114.500" r=".8" fill="#222"/><circle cx="75" cy="114.500" r=".8" fill="#222"/>
</svg>
<svg class="p" style="left:391px;top:380px" width="83" height="93" viewBox="0 0 83 93">
<rect width="83" height="93" fill="#16283a"/>
<g fill="#5a7488" opacity=".6"><circle cx="14" cy="10" r="3"/><circle cx="26" cy="18" r="2"/><circle cx="46" cy="8" r="3"/><circle cx="62" cy="20" r="3"/><circle cx="74" cy="10" r="2"/><circle cx="8" cy="30" r="2"/><circle cx="66" cy="38" r="3"/><circle cx="76" cy="46" r="2"/><circle cx="40" cy="30" r="2"/></g>
<path d="M0 36C12 42 18 60 20 93H0Z" fill="#3a5a7e"/>
<path d="M30 44L40 28 52 46V56H30Z" fill="#6e2e26"/>
<path d="M26 46L39 24 56 40 50 40 38 32 30 48Z" fill="#e4e9ee"/>
<rect x="38" y="42" width="6" height="9" fill="#d88a62"/>
<path d="M20 54H58V58H22Z" fill="#c8d4de"/>
<path d="M18 60H83V93H16Z" fill="#2a4660"/><path d="M30 70L60 66 70 93H30Z" fill="#35526e"/>
<path d="M50 76L60 70M44 82L66 74" stroke="#1f3346" stroke-width="1.500"/>
</svg>
<!-- COL 6 -->
<svg class="p" style="left:480.500px;top:186px" width="83" height="21" viewBox="0 0 83 21">
<rect width="83" height="21" fill="#dcd2c4"/><path d="M6 4H30L26 12H10ZM44 4h14v9H44Z" fill="#f2eee8"/><path d="M0 15Q40 10 83 15V21H0Z" fill="#c8bca8"/><rect x="68" y="4" width="6" height="10" fill="#8a6a3a"/>
</svg>
<svg class="p" style="left:480.500px;top:235px" width="83" height="104" viewBox="0 0 83 104">
<rect width="83" height="104" fill="#b9bec0"/>
<rect width="83" height="5" fill="#2a2c2a"/>
<path d="M0 0H14L20 60 14 80H0ZM62 18L70 0H83V82L62 60Z" fill="#1a2320"/>
<path d="M26 40L32 22 38 40ZM46 32L50 20 54 32Z" fill="#44504e"/>
<path d="M4 30L14 24 12 36ZM70 24L80 34 68 38ZM2 52L14 46 14 58ZM72 54L82 60 70 66Z" fill="#b8c0c2"/>
<path d="M20 60L44 36 68 60V78H20Z" fill="#5a1e1c"/>
<path d="M16 62L44 32 72 62 68 64 44 40 20 65Z" fill="#2e2422"/>
<path d="M30 50L44 38 58 50 44 44Z" fill="#c7d2d6" opacity=".6"/>
<rect x="38" y="60" width="13" height="18" fill="#1a120e"/><rect x="38" y="54" width="12" height="5" fill="#e3402e"/>
<circle cx="44" cy="58" r="9" fill="url(#gWarm)" opacity=".5"/>
<path d="M0 80L20 78 66 78 83 82V104H0Z" fill="#e3e5e6"/>
<path d="M38 78H50L58 96H30Z" fill="#cfd3d4"/>
<path d="M0 90H8V104H0Z" fill="#30302e"/>
<rect x="4" y="5" width="38" height="15" rx="5" fill="#ddd" opacity=".5"/>
<rect x="51" y="5" width="27" height="15" rx="5" fill="#e02040" opacity=".6"/>
<text x="9" y="14.500" style="font-size:4.800px;fill:#444" opacity=".55">Tiny Cabin C...</text>
<text x="64.500" y="14.500" style="font-size:4.800px;font-weight:bold;fill:#fff;text-anchor:middle" opacity=".6">Guardar</text>
<rect x="4" y="89" width="46" height="11" rx="5.500" fill="#e6e6e6" opacity=".65"/>
<text x="14" y="96.500" style="font-size:5px;font-weight:bold;fill:#333">www.buzzb...</text>
<circle cx="59" cy="94.500" r="5.500" fill="#eee" opacity=".65"/><circle cx="73" cy="94.500" r="5.500" fill="#eee" opacity=".45"/>
</svg>
<svg class="p" style="left:480.500px;top:367px" width="83" height="106" viewBox="0 0 83 106">
<rect width="83" height="106" fill="url(#gBlue)"/>
<path d="M0 14H83M0 24H83M0 34H83" stroke="#7fa9ce" stroke-width="1.300" opacity=".45"/>
<path d="M0 54L12 50 24 46 34 42 40 34 46 28 52 38 62 46 74 48 83 50V74H0Z" fill="#e6edf3"/>
<path d="M4 56l4-7 4 7zM18 54l4-8 4 8zM32 50l4-8 4 8zM50 46l5-10 5 10zM66 54l4-8 4 8z" fill="#b6c6d4"/>
<path d="M0 70H83V106H0Z" fill="#d6e6f2"/>
<path d="M6 72L56 66 64 70V92H8Z" fill="#23262a"/>
<path d="M2 72L52 64 66 70 60 71 52 68 8 76Z" fill="#f4f6f8"/>
<rect x="24" y="78" width="6" height="9" fill="#e5b34a"/><rect x="14" y="76" width="6" height="6" fill="#8aa4b8"/><rect x="36" y="76" width="10" height="6" fill="#8aa4b8"/>
<path d="M0 88Q40 82 72 88 80 80 83 84V106H0Z" fill="#e9f2fa"/>
</svg>
<!-- COL 7 -->
<svg class="p" style="left:570px;top:221px" width="83" height="125" viewBox="0 0 83 125">
<rect width="83" height="66" fill="#dcdcdd"/>
<rect y="60" width="83" height="65" fill="#8e9295"/>
<path d="M0 30L14 34 18 60H0Z" fill="#8e8e90"/>
<path d="M10 60L16 20 22 60ZM28 45L37 16 44 45ZM46 45L49 28 52 45Z" fill="#2a3433"/>
<path d="M54 62L64 4 72 62Z" fill="#252d2c"/><path d="M66 62L74 12 83 30V62Z" fill="#1e2625"/>
<path d="M22 58L32 44 50 44 62 60Z" fill="#5a2c20"/>
<path d="M22 50L32 44 44 46 50 42 60 58 52 54 44 50 32 50Z" fill="#efeff0"/>
<rect x="26" y="52" width="12" height="6" fill="#e0a055"/><rect x="42" y="52" width="8" height="5" fill="#b86a3c"/>
<rect x="0" y="64" width="83" height="10" fill="#e6e7e8"/>
<path d="M2 68h78" stroke="#6a6e70" stroke-width="1.800" stroke-dasharray="1.800 1.200"/>
<path d="M0 74H83V125H0Z" fill="#8b8e90"/>
<path d="M54 74H83V125H58Z" fill="#15191a"/>
<path d="M24 74H58L48 92 40 108 32 92Z" fill="#3a3c3a"/>
<path d="M24 76H56L52 86 40 94 30 88Z" fill="#c48a4c"/>
<path d="M26 88L40 82 54 88 42 94Z" fill="#d9dadb"/>
<path d="M12 76L16 116 20 76ZM46 90L47 110 49 90Z" fill="#23292a"/>
<path d="M0 74H20V100H0Z" fill="#b8babb" opacity=".55"/>
</svg>
<svg class="p" style="left:569.500px;top:373px" width="83" height="100" viewBox="0 0 83 100">
<rect width="83" height="100" fill="#2a1c14"/>
<path d="M0 0H10V30L0 44Z" fill="#6a3a24"/>
<path d="M6 20L24 0 34 0 8 36Z" fill="#22302e"/><path d="M10 14L20 2" stroke="#aab5b0" stroke-width="3"/>
<path d="M34 0L22 24 20 42 4 74V100H0V44Z" fill="#5c2f1c"/>
<path d="M36 0H64L30 34 26 24Z" fill="#8c6d50"/>
<path d="M58 0H78V16L52 18Z" fill="#d6d6d4"/><path d="M50 20L68 0" stroke="#2a2a2a" stroke-width="2.500"/>
<path d="M28 36L82 24V36L34 46V100H28Z" fill="#c99e72"/>
<path d="M34 42L62 36V100H34Z" fill="#dacbb8"/>
<rect x="62" y="36" width="21" height="64" fill="#b9c7bb"/><path d="M62 62H83" stroke="#6a5a48"/>
<path d="M44 40L36 74H54Z" fill="#b5b068"/><path d="M39 50H50M37 60H52M36 68H54" stroke="#e6e0a0" stroke-width="2"/>
<path d="M22 36V80" stroke="#1a120e" stroke-width="3"/>
<path d="M0 100V84Q24 78 34 88V100Z" fill="#17110d"/>
</svg>

<svg class="f" width="692" height="1652" viewBox="0 0 692 1652">
<g class="h">
<text x="11" y="19.500" textLength="48" lengthAdjust="spacingAndGlyphs">File Name</text><text x="64" y="19.500">:</text><text x="73" y="19.500" textLength="103" lengthAdjust="spacingAndGlyphs">2 Getting Started.mp4</text>
<text x="11" y="34.500" textLength="39" lengthAdjust="spacingAndGlyphs">File Size</text><text x="64" y="34.500">:</text><text x="73" y="34.500" textLength="46" lengthAdjust="spacingAndGlyphs">104.9 MB</text>
<text x="11" y="49.500" textLength="49" lengthAdjust="spacingAndGlyphs">Resolution</text><text x="64" y="49.500">:</text><text x="73" y="49.500" textLength="90" lengthAdjust="spacingAndGlyphs">1920x1080 / 30 fps</text>
<text x="11" y="64.500" textLength="42" lengthAdjust="spacingAndGlyphs">Duration</text><text x="64" y="64.500">:</text><text x="73" y="64.500" textLength="44" lengthAdjust="spacingAndGlyphs">00:03:23</text>
<text x="11" y="79.500" textLength="25" lengthAdjust="spacingAndGlyphs">Video</text><text x="64" y="79.500">:</text><text x="73" y="79.500" textLength="154" lengthAdjust="spacingAndGlyphs">H264 (High) :: 4.04 Mb/s, 30 fps</text>
<text x="11" y="94.500" textLength="27" lengthAdjust="spacingAndGlyphs">Audio</text><text x="64" y="94.500">:</text><text x="72" y="94.500" textLength="240" lengthAdjust="spacingAndGlyphs">AAC (LC) :: 175 kb/s, 48000 Hz, 2 channels :: Und</text>
</g>

<!-- FRAME 1 -->
<rect x="7" y="138" width="678" height="52" fill="#fff"/>
<use href="#hdr" x="0" y="103" width="692" height="60"/>
<text x="68" y="123.500" style="font-size:4.800px;fill:#555">pinterest.pt/search/pins/?q=winter%20cabin&amp;rs=typed&amp;term_meta[]=winter%7Ctyped&amp;term_meta[]=cabin%7Ctyped</text>
<rect x="91" y="145" width="521" height="18" rx="9" fill="#efefef"/>
<text x="97" y="156" style="font-size:5.600px;fill:#888">winter cabin</text>
<text x="549.500" y="157" style="font-size:8px;font-weight:bold;fill:#222">X</text>
<text x="568" y="156" style="font-size:4.800px;font-weight:bold;fill:#333">Todos os Pins</text>
<path d="M602 153l2 2 2-2" stroke="#333" stroke-width=".8" fill="none"/>
<use href="#hic" x="0" y="144" width="692" height="20"/>
<rect x="14.500" y="168" width="33" height="18" rx="9" fill="#444"/><text x="31" y="179" class="pl">Aesthetic</text>
<rect x="51" y="168" width="22" height="18" rx="9" fill="#6b5a52"/><text x="62" y="179" class="pl">Cozy</text>
<rect x="76" y="168" width="25" height="18" rx="9" fill="#5d5a58"/><text x="88.500" y="179" class="pl">Outfit</text>
<rect x="104" y="168" width="41" height="18" rx="9" fill="#3f3f3f"/><text x="124.500" y="179" class="pl">In the woods</text>
<rect x="149" y="168" width="28" height="18" rx="9" fill="#7a2a10"/><text x="163" y="179" class="pl">Interior</text>
<rect x="180.500" y="168" width="33.500" height="18" rx="9" fill="#33292d"/><text x="197" y="179" class="pl">Minecraft</text>
<rect x="217" y="168" width="32" height="18" rx="9" fill="#4a3c30"/><text x="233" y="179" class="pl">Wedding</text>
<rect x="253" y="168" width="30" height="18" rx="9" fill="#4a5a8a"/><text x="268" y="179" class="pl">Painting</text>
<rect x="286" y="168" width="31" height="18" rx="9" fill="#9a9a9a"/><text x="301.500" y="179" class="pl">Vacation</text>
<rect x="320" y="168" width="60" height="18" rx="9" fill="#4e3520"/><text x="350" y="179" class="pl">In the woods interior</text>
<rect x="383" y="168" width="30" height="18" rx="9" fill="#aaa"/><text x="398" y="179" class="pl">Exterior</text>
<rect x="416" y="168" width="24.500" height="18" rx="9" fill="#a8674a"/><text x="428" y="179" class="pl">Decor</text>
<rect x="444" y="168" width="54" height="18" rx="9" fill="#aaa"/><text x="471" y="179" class="pl">In the woods snow</text>
<rect x="502" y="168" width="32" height="18" rx="9" fill="#4a2015"/><text x="518" y="179" class="pl">Bedroom</text>
<rect x="537.500" y="168" width="36" height="18" rx="9" fill="#2b5a78"/><text x="555.500" y="179" class="pl">Illustration</text>
<rect x="577" y="168" width="29.500" height="18" rx="9" fill="#66615d"/><text x="592" y="179" class="pl">Modern</text>
<rect x="609.500" y="168" width="33" height="18" rx="9" fill="#b5b5b5"/><text x="626" y="179" class="pl">Romantic</text>
<rect x="646" y="168" width="26" height="18" rx="9" fill="#bbb"/>
<rect x="620" y="166" width="55" height="22" fill="url(#fade)"/>
<path d="M676 174l2.500 3-2.500 3" stroke="#555" stroke-width=".8" fill="none"/>
<g class="pt">
<text x="36" y="196">Bring Your Favourite Person...</text>
<text x="36" y="328">Wood Cabins, Canada - The</text><text x="36" y="335">Londoner</text>
<text x="125" y="238">Heartwarming snowy cabin for</text><text x="125" y="245">Christmas</text>
<text x="125" y="330">This Rockefeller Great Camp Can</text><text x="125" y="336.500">Be the Winter Vacation of...</text>
<text x="214" y="237">22 Must See Winter Cabins Deep</text><text x="214" y="244">In The Woods - Deluxe Timber</text>
<text x="214" y="367">Winter wonderland</text>
<text x="304" y="205">Essential Items for Your Off Grid</text><text x="304" y="212">Tiny House</text>
<text x="304" y="360">How To Build an Off Grid Winter</text><text x="304" y="367">Cabin for $300...</text>
<text x="393" y="361">Chalet Courchevel — Angélique</text><text x="393" y="367.500">Buisson</text>
<text x="482" y="215">Favorite Holiday Houses -</text><text x="482" y="222">KristyWicks.com</text>
<text x="482" y="347">19 snowy cabins you'll want to</text><text x="482" y="354">retreat to this winter</text>
<text x="571" y="193">Cozy cabins for the perfect winter</text><text x="571" y="200">vacation!</text>
<text x="572" y="354">x</text>
</g>
<path d="M128 249q-1.500-1.500-3-.5-1 1.500.5 3l2.500 2.500 2.500-2.500q1.500-1.500.5-3-1.500-1-3 .5" fill="#d4112c"/>
<text x="133.500" y="252.500" class="ps">30</text>
<circle cx="218" cy="373" r="2.100" fill="#d4112c"/><circle cx="224.500" cy="373" r="2.100" fill="#d48a2c"/><circle cx="231" cy="373" r="2.100" fill="#2d8a8a"/><text x="236" y="375" class="ps">243</text>
<circle cx="574.500" cy="204.500" r="2.100" fill="#d4112c"/><circle cx="581" cy="204.500" r="2.100" fill="#2d8a7a"/><circle cx="588" cy="204.500" r="2.100" fill="#c88a2c"/><text x="593" y="206.500" class="ps">803</text>
<text x="571" y="361" class="ps">Etsy</text>
<path d="M262 367l2-4 2 4z" fill="#5a7a3a"/>
<circle cx="596" cy="198" r="1.300" fill="#333"/>
<rect x="681" y="190" width="4" height="281" fill="#f3f3f3"/>
<rect x="681.500" y="190" width="3" height="62" fill="#c4c4c4"/>
<rect x="7" y="463" width="100" height="8" fill="#f0f0f0"/>
<text x="8" y="469" style="font-size:4px;fill:#777">https://...</text><text x="80" y="469" style="font-size:4px;fill:#777">905011249/</text>
<g opacity=".5"><use href="#logo" x="586" y="412" width="92" height="50"/></g>
<text x="666" y="443.500" style="font-size:9px;font-weight:bold;fill:#222;text-anchor:middle">+</text>
<text x="666" y="460" style="font-size:7px;font-weight:bold;fill:#222;text-anchor:middle">?</text>
<rect x="7" y="471" width="678" height="2" fill="#3c1a72"/>
<rect x="7" y="473" width="678" height="11" fill="#26272b"/>
<text x="87" y="483" class="tt" textLength="278" lengthAdjust="spacingAndGlyphs">3D Modeling in Blender - Christmas Cabin</text>
<rect x="7" y="103" width="678" height="381" fill="none" stroke="#d0d0d0" stroke-width=".7"/>
<use href="#man" x="11" y="400" width="78" height="78"/>
<text x="616" y="122.500" class="tc" textLength="64">00:00:40</text>

<!-- FRAME 2 -->
<use href="#hdr" x="0" y="490" width="692" height="60"/>
<text x="68" y="510.500" style="font-size:4.800px;fill:#555">pinterest.pt/pin/719593846705156603/</text>
<rect x="91" y="532" width="521" height="18" rx="9" fill="#efefef"/>
<circle cx="99" cy="540" r="2" fill="none" stroke="#555" stroke-width=".9"/><path d="M100.500 541.500l2 2" stroke="#555" stroke-width=".9"/>
<text x="105" y="543.500" style="font-size:5.600px;fill:#999">Pesquisar</text>
<use href="#hic" x="0" y="531" width="692" height="20"/>
<path d="M21 571.500h6M24 568.500l-3 3 3 3" stroke="#111" stroke-width="1.300" fill="none"/>
<rect x="164" y="562" width="359" height="143" rx="7" fill="#fff" stroke="#f0f0f0" stroke-width="1"/>
<svg x="164" y="562" width="179" height="143" viewBox="0 0 179 143">
<rect width="179" height="143" fill="url(#gNight)"/>
<path d="M0 85L8 62 14 82 22 58 30 84 40 68 50 90 62 62 72 88 100 80 120 78 138 66 150 84 162 58 170 80 179 62V100H0Z" fill="#2b3668"/>
<path d="M0 86L40 90 60 94 84 88 120 88 150 92 179 84V143H0Z" fill="#8e96b6"/>
<path d="M0 104C30 92 60 108 90 106S150 96 179 100V143H0Z" fill="#9aa1bd"/>
<path d="M0 122C40 112 80 130 120 122S160 118 179 122V143H0Z" fill="#a3aac4"/>
<path d="M123 44L133 105H113Z" fill="#2f6658"/><path d="M117 84l12-4M119 74l10-3M121 62l6-2M115 94l16-4" stroke="#d8dcc0" stroke-width="1.100"/>
<path d="M85 95V108H116V95Z" fill="#6d3b26"/>
<path d="M82 98Q84 82 94 80 102 78 114 86L118 100 100 94Z" fill="#e4e2ea"/>
<rect x="91" y="101" width="4" height="4" fill="#d8a040"/><rect x="102" y="101" width="4" height="4" fill="#d8a040"/><rect x="91" y="87" width="4" height="5" fill="#6d3b26"/>
<g fill="#d5daf0">
<circle cx="15" cy="12" r=".8"/><circle cx="40" cy="6" r=".7"/><circle cx="70" cy="15" r=".8"/><circle cx="100" cy="8" r=".7"/><circle cx="130" cy="18" r=".9"/><circle cx="160" cy="10" r=".7"/><circle cx="25" cy="32" r=".7"/><circle cx="60" cy="40" r=".8"/><circle cx="84" cy="30" r=".7"/><circle cx="112" cy="36" r=".8"/><circle cx="150" cy="40" r=".7"/><circle cx="170" cy="28" r=".8"/><circle cx="10" cy="50" r=".8"/><circle cx="45" cy="58" r=".7"/><circle cx="95" cy="52" r=".8"/><circle cx="142" cy="56" r=".7"/><circle cx="165" cy="62" r=".8"/><circle cx="30" cy="70" r=".7"/><circle cx="75" cy="68" r=".6"/><circle cx="54" cy="22" r=".7"/><circle cx="120" cy="22" r=".8"/>
</g>
<path d="M46 14a5 5 0 1 0 5 7 4.500 4.500 0 0 1-5-7Z" fill="#c8cfe8"/>
<path d="M63 77l5-5M64 72h4v4" stroke="#fff" stroke-width="1.100" fill="none"/>
<text x="71" y="78" style="font-size:6.400px;font-weight:bold;fill:#fff">dreamstime.com</text>
<circle cx="164" cy="129" r="8" fill="#fff"/>
<path d="M160 127v-2h2M166 125h2v2M168 131v2h-2M162 133h-2v-2" stroke="#333" stroke-width=".9" fill="none"/><circle cx="164" cy="129" r="1.600" fill="#333"/>
</svg>
<path d="M164 569q0-7 7-7h-7zM164 698q0 7 7 7h-7z" fill="#fff"/>
<circle cx="433.300" cy="633" r="7" fill="#777"/>
<g fill="#fff"><circle cx="431.300" cy="631" r="1"/><circle cx="435.300" cy="631" r="1"/><circle cx="431.300" cy="635" r="1"/><circle cx="435.300" cy="635" r="1"/></g>
<path d="M316 714v-6q0-1.500 1-1.500t1 1.500v3l1.500 .5 1.500 .5v3l-1 2.500h-3.500z" fill="#fff" stroke="#444" stroke-width=".6"/>
<rect x="7" y="851" width="225" height="7" fill="#eeeeee"/>
<text x="60" y="856.500" style="font-size:4px;fill:#777">winter-night-landscape-snow-covered-log-cabin-winter-cabin-background-imag...</text>
<g opacity=".3"><use href="#logo" x="586" y="801" width="92" height="50"/></g>
<text x="666" y="830.500" style="font-size:9px;font-weight:bold;fill:#222;text-anchor:middle">+</text>
<text x="666" y="847" style="font-size:7px;font-weight:bold;fill:#222;text-anchor:middle">?</text>
<rect x="681" y="538" width="4" height="320" fill="#fafafa"/>
<rect x="7" y="858" width="678" height="2" fill="#3c1a72"/>
<rect x="7" y="860" width="678" height="12" fill="#26272b"/>
<text x="87" y="870.500" class="tt" textLength="278" lengthAdjust="spacingAndGlyphs">3D Modeling in Blender - Christmas Cabin</text>
<rect x="7" y="490" width="678" height="382" fill="none" stroke="#d0d0d0" stroke-width=".7"/>
<use href="#man" x="11" y="786" width="78" height="78"/>
<text x="621" y="510" class="tc" textLength="59">00:01:21</text>

<!-- FRAME 3 -->
<rect x="7" y="885" width="561" height="327" fill="#3d3d3d"/>
<g stroke="#444" stroke-width=".5" fill="none">
<path d="M110 904L145 1212M238 904L300 1212M40 1010L568 930M7 1170L568 1100M340 904L568 1060M7 1000L300 1212M440 904L220 1212"/>
</g>
<path d="M143 910L437 1212" stroke="#7e4a4a" stroke-width=".7"/>
<path d="M7 1115L568 1000" stroke="#6e7a45" stroke-width=".8"/>
<polygon points="267,1042 292,1036 307,1044 307,1072 280,1081 268,1069" fill="#777"/>
<polygon points="267,1042 292,1036 307,1044 282,1050" fill="#818181"/>
<circle cx="287" cy="1058" r="4" fill="none" stroke="#c8c8c8" stroke-width=".6" stroke-dasharray="1 .8"/>
<path d="M216 1039L210 1047 222 1047Z" fill="#000"/>
<path d="M199 1052L219 1044 226 1062 208 1060Z M199 1052L222 1047" stroke="#222" stroke-width=".7" fill="none"/>
<path d="M218 1048l0 5 1.200-1.200 1.400 2 .7-.5-1.400-2h1.700z" fill="#fff"/>
<circle cx="334" cy="984" r="3.500" fill="#a98033"/><circle cx="334" cy="984" r="5" fill="none" stroke="#a98033" stroke-width=".8" stroke-dasharray="1 1"/>
<use href="#bch" x="0" y="0" width="692" height="1652"/>
<g class="bs">
<text x="30" y="909.500">Object Mode</text><text x="54" y="909.500">View</text><text x="67" y="909.500">Select</text><text x="83" y="909.500">Add</text><text x="95" y="909.500">Object</text>
<rect x="246" y="905" width="24" height="7" rx="1" fill="#4a4a4a"/><text x="252" y="910">Mode</text>
<text x="30" y="920.500" fill="#ccc">User Perspective</text><text x="30" y="926.500" fill="#ccc">(1) Collection | Light</text>
<text x="564" y="1243">Collection | Light | Verts:8 | Faces:6 | Tris:12 | Objects:1/3 | 2.90.1</text>
<text x="88" y="1219">ayback</text>
<text x="102" y="1243">Pan View</text><text x="185" y="1243">Set 3D Cursor</text><text x="222" y="1243">Move</text>
</g>
<rect x="568.500" y="932" width="116" height="7" fill="#34528a"/>
<g class="bs">
<text x="584" y="911">Scene Collection</text><text x="600" y="917.500">Collection</text><text x="600" y="924">Camera</text><text x="600" y="931">Cube</text><text x="600" y="938">Light</text>
</g>
<circle cx="593" cy="922" r="2" fill="#b06a3a"/><path d="M591 927h4l-2 4z" fill="#c96a3a"/><circle cx="593" cy="936" r="2" fill="#999"/>
<rect x="620" y="919" width="6" height="6" rx="1" fill="#3e7d5a"/><path d="M616 927l3 5 3-5" stroke="#3e7d5a" fill="none" stroke-width=".8"/>
<g fill="#ccc"><circle cx="680" cy="915" r="1.300"/><circle cx="680" cy="922" r="1.300"/><circle cx="680" cy="929" r="1.300"/><circle cx="680" cy="936" r="1.300"/></g>
<rect x="588" y="913" width="5" height="5" fill="#aaa"/>
<text x="596" y="1011.500" class="bs">Light</text><text x="596" y="1022.500" class="bs">Light</text>
<g class="bv">
<text x="644" y="1044">4.0762 m</text><text x="644" y="1051">1.0055 m</text><text x="644" y="1058">5.9039 m</text>
<text x="644" y="1067">37.3°</text><text x="644" y="1074">3.16°</text><text x="644" y="1081">107°</text>
</g>
<use href="#logo" x="586" y="1185" width="92" height="50"/>
<text x="87" y="1257" class="tt" textLength="278" lengthAdjust="spacingAndGlyphs">3D Modeling in Blender - Christmas Cabin</text>
<rect x="7" y="877" width="678" height="381" fill="none" stroke="#d0d0d0" stroke-width=".7"/>
<use href="#man" x="10.500" y="1173" width="78" height="78"/>
<text x="619" y="896" class="tc" style="stroke-width:.6px" textLength="59">00:02:01</text>

<!-- FRAME 4 -->
<rect x="7" y="1272" width="561" height="327" fill="#3d3d3d"/>
<g stroke="#444" stroke-width=".5" fill="none">
<path d="M310 1291L308 1599M362 1440L360 1599M7 1510L568 1470M400 1291L568 1400M7 1330L280 1400M440 1450L420 1599"/>
</g>
<path d="M7 1422L567 1467" stroke="#7e4a4a" stroke-width=".7"/>
<path d="M341 1291L233 1598" stroke="#b0a890" stroke-width=".8"/>
<polygon points="258,1394 328,1398 319,1500 244,1492 240,1423" fill="#7f8181"/>
<polygon points="258,1394 328,1398 323,1429 240,1425" fill="#8a8c8c"/>
<path d="M328 1399L321 1470 320 1498 327 1450Z" fill="#4b4b4b"/>
<polygon points="258,1394 328,1398 319,1500 244,1492 240,1423" fill="none" stroke="#f2f2f2" stroke-width="1"/>
<path d="M311 1380L268 1510" stroke="#a8a59a" stroke-width=".7"/>
<circle cx="287" cy="1444" r="4.500" fill="none" stroke="#e0c0b0" stroke-width=".7" stroke-dasharray="1.300 .9"/>
<path d="M287 1444L372 1434" stroke="#222" stroke-width=".8" stroke-dasharray="2 1"/>
<path d="M370 1434l4-2.500v5zM382 1432l-3-2.500v5z" fill="#000"/>
<use href="#bch" x="0" y="387" width="692" height="1652"/>
<text x="13" y="1297.500" class="bs">Scale: 1.0000 along global Y</text>
<g class="bs">
<text x="30" y="1307.500" fill="#ccc">User Perspective</text><text x="30" y="1313.500" fill="#ccc">(1) Collection | Cube</text>
<text x="564" y="1630">Collection | Cube | Verts:8 | Faces:6 | Tris:12 | Objects:1/2 | 2.90.1</text>
<text x="88" y="1606">ayback</text>
<text x="90" y="1630">Y axis</text><text x="113" y="1630">Z axis</text><text x="147" y="1630">X plane</text><text x="179" y="1630">Y plane</text><text x="209" y="1630">Z plane</text><text x="235" y="1630">Clear Constraints</text><text x="280" y="1630">Snap Invert</text><text x="318" y="1630">Snap Toggle</text><text x="350" y="1630">Move</text><text x="372" y="1630">Rotate</text><text x="396" y="1630">Resize</text>
</g>
<g fill="none" stroke="#9a9a9a" stroke-width=".6"><rect x="84" y="1627" width="5" height="5"/><rect x="107" y="1627" width="5" height="5"/><rect x="129" y="1627" width="5" height="5"/><rect x="135" y="1627" width="5" height="5"/><rect x="162" y="1627" width="5" height="5"/><rect x="168" y="1627" width="5" height="5"/><rect x="194" y="1627" width="5" height="5"/><rect x="200" y="1627" width="5" height="5"/><rect x="227" y="1627" width="5" height="5"/><rect x="269" y="1627" width="5" height="5"/><rect x="301" y="1627" width="5" height="5"/><rect x="308" y="1627" width="5" height="5"/><rect x="342" y="1627" width="5" height="5"/><rect x="364" y="1627" width="5" height="5"/><rect x="388" y="1627" width="5" height="5"/></g>
<rect x="568.500" y="1305" width="116" height="7" fill="#34528a"/>
<g class="bs">
<text x="584" y="1297.500">Scene Collection</text><text x="600" y="1304.500">Collection</text><text x="600" y="1311">Cube</text><text x="600" y="1318.500" fill="#666">CameraLight</text><text x="600" y="1325.500">Camera</text><text x="600" y="1332.500">Light</text>
</g>
<path d="M591 1307h4l-2 4z" fill="#c96a3a"/><circle cx="593" cy="1323" r="2" fill="#b06a3a"/><circle cx="593" cy="1330" r="2" fill="#c9944a"/>
<rect x="620" y="1321" width="6" height="6" rx="1" fill="#3e7d5a"/><path d="M614 1306l3 5 3-5" stroke="#3e7d5a" fill="none" stroke-width=".8"/>
<g fill="#ccc"><circle cx="680" cy="1302" r="1.300"/><circle cx="680" cy="1309" r="1.300"/><circle cx="680" cy="1323" r="1.300"/><circle cx="680" cy="1330" r="1.300"/></g>
<text x="596" y="1398.500" class="bs">Cube</text><text x="596" y="1409.500" class="bs">Cube</text>
<g class="bv">
<text x="644" y="1431">0 m</text><text x="644" y="1438">0 m</text><text x="644" y="1445">0 m</text>
<text x="644" y="1454">0°</text><text x="644" y="1461">0°</text><text x="644" y="1468">0°</text>
</g>
<use href="#logo" x="586" y="1572" width="92" height="50"/>
<text x="87" y="1644" class="tt" textLength="278" lengthAdjust="spacingAndGlyphs">3D Modeling in Blender - Christmas Cabin</text>
<rect x="7" y="1264" width="678" height="381" fill="none" stroke="#d0d0d0" stroke-width=".7"/>
<use href="#man" x="10.500" y="1560" width="78" height="78"/>
<text x="617" y="1283" class="tc" style="stroke-width:.6px" textLength="61">00:02:42</text>
</svg>
</div></body></html>
